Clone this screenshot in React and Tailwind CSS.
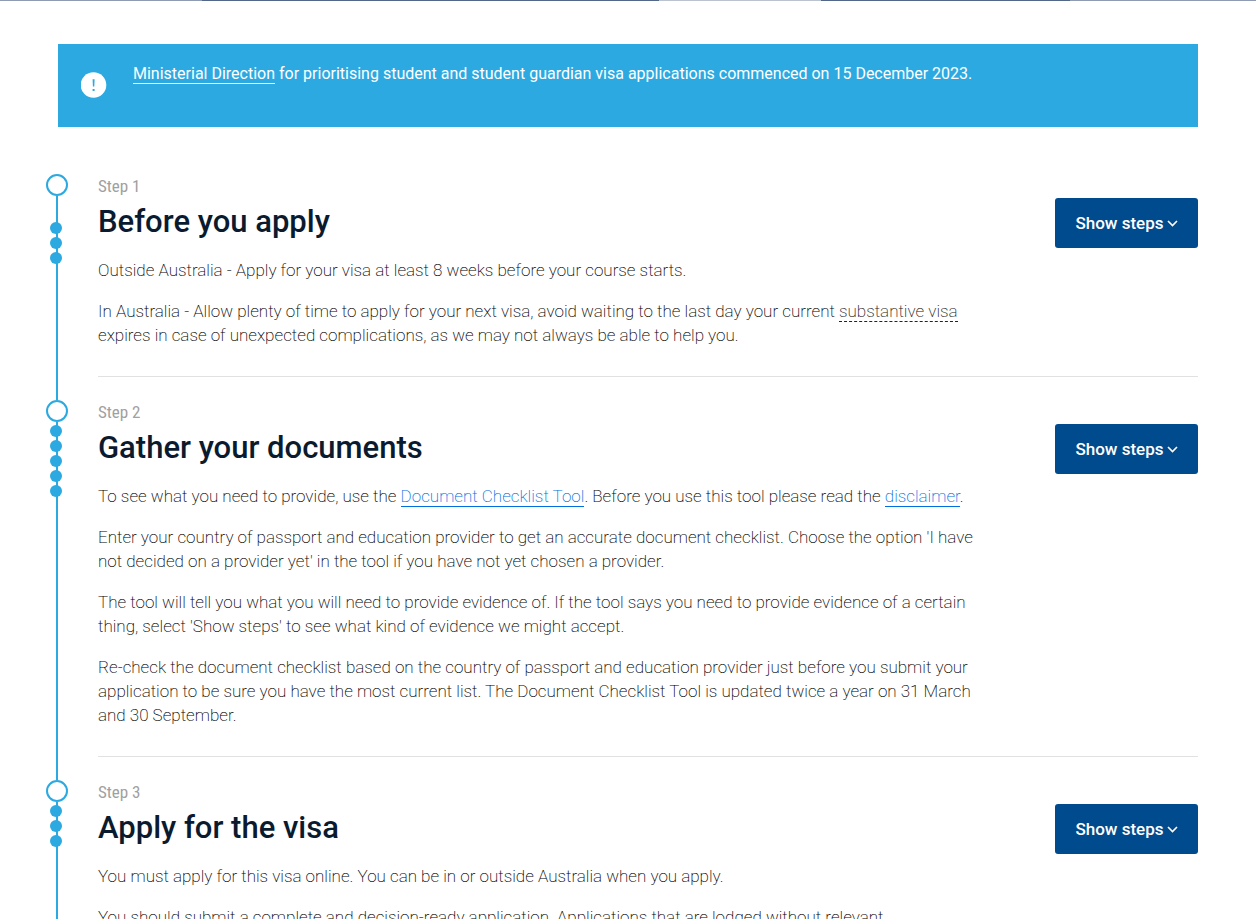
const textLink = "border-b border-[#0070e0] text-[#0070e0]";

function Step({ number, title, dots, dotsClass, children }) {
  return (
    <li className="flex gap-[30px]">
      <div className="relative flex w-[22px] shrink-0 flex-col items-center" aria-hidden="true">
        <span className="size-[22px] shrink-0 rounded-full border-2 border-[#2ca9e1] bg-white" />
        <span className="w-[2px] flex-1 bg-[#2ca9e1]" />
        <div className={`absolute left-1 flex flex-col gap-[3px] ${dotsClass}`}>
          {Array.from({ length: dots }, (_, i) => (
            <span key={i} className="size-3 rounded-full bg-[#2ca9e1]" />
          ))}
        </div>
      </div>
      <div className="mb-[23px] flex flex-1 items-start justify-between border-b border-[#e0e1e3] pb-[29px]">
        <div className="max-w-[885px] flex-1">
          <p className="font-['Roboto_Condensed','Roboto',sans-serif] text-[17px] leading-6 text-[#a0a0a0]">
            Step {number}
          </p>
          <h2 className="mt-1 text-[31px] leading-10 font-medium text-[#0b1b2f]">{title}</h2>
          <div className="mt-4 flex flex-col gap-[17px] font-extralight">{children}</div>
        </div>
        <button
          type="button"
          className="mt-6 flex h-[50px] w-[143px] shrink-0 items-center justify-center gap-[3px] rounded-[3px] bg-[#004b8d] font-medium text-white"
        >
          Show steps
          <svg viewBox="0 0 11 7" className="h-[7px] w-[11px]" fill="none" stroke="currentColor" strokeWidth="1.6">
            <path d="M1 1l4.5 4.5L10 1" />
          </svg>
        </button>
      </div>
    </li>
  );
}

export default function App() {
  return (
    <div className="h-screen overflow-hidden bg-white font-['Roboto',sans-serif] text-[17px] leading-6 text-black">
      <div className="flex h-px">
        <span className="w-[16.1%] bg-[#8e9bb3]" />
        <span className="w-[36.4%] bg-[#536888]" />
        <span className="w-[12.9%] bg-[#bbc3d1]" />
        <span className="w-[19.8%] bg-[#536888]" />
        <span className="flex-1 bg-[#8e9bb3]" />
      </div>
      <main className="pt-[43px] pr-[58px] pl-[46px]">
        <div className="ml-3 flex h-[83px] items-start bg-[#2ca9e1] pt-[17px] pr-5 pl-[23px] text-white">
          <svg viewBox="0 0 26 26" className="mt-[11px] size-[26px] shrink-0" aria-hidden="true">
            <circle cx="12.5" cy="13" r="12.8" fill="#fff" />
            <path d="M11.6 7.2h2l-.3 7.3h-1.4zM11.6 17h2v2h-2z" fill="#2ca9e1" />
          </svg>
          <p className="mt-px ml-[26px] text-base leading-6">
            <a href="#direction" className="border-b border-white">Ministerial Direction</a> for prioritising student
            and student guardian visa applications commenced on 15 December 2023.
          </p>
        </div>
        <ol className="mt-[47px]">
          <Step number={1} title="Before you apply" dots={3} dotsClass="top-12">
            <p>Outside Australia - Apply for your visa at least 8 weeks before your course starts.</p>
            <p>
              In Australia - Allow plenty of time to apply for your next visa, avoid waiting to the last day your
              current{" "}
              <a href="#substantive-visa" className="border-b border-dashed border-[#222] text-[#222]">
                substantive visa
              </a>{" "}
              expires in case of unexpected complications, as we may not always be able to help you.
            </p>
          </Step>
          <Step number={2} title="Gather your documents" dots={5} dotsClass="top-[25px]">
            <p>
              To see what you need to provide, use the{" "}
              <a href="#checklist" className={textLink}>Document Checklist Tool</a>. Before you use this tool please
              read the <a href="#disclaimer" className={textLink}>disclaimer</a>.
            </p>
            <p>
              Enter your country of passport and education provider to get an accurate document checklist. Choose the
              option 'I have not decided on a provider yet' in the tool if you have not yet chosen a provider.
            </p>
            <p>
              The tool will tell you what you will need to provide evidence of. If the tool says you need to provide
              evidence of a certain thing, select 'Show steps' to see what kind of evidence we might accept.
            </p>
            <p>
              Re-check the document checklist based on the country of passport and education provider just before you
              submit your application to be sure you have the most current list. The Document Checklist Tool is updated
              twice a year on 31 March and 30 September.
            </p>
          </Step>
          <Step number={3} title="Apply for the visa" dots={3} dotsClass="top-[25px]">
            <p>You must apply for this visa online. You can be in or outside Australia when you apply.</p>
            <p>You should submit a complete and decision-ready application. Applications that are lodged without relevant</p>
          </Step>
        </ol>
      </main>
    </div>
  );
}
